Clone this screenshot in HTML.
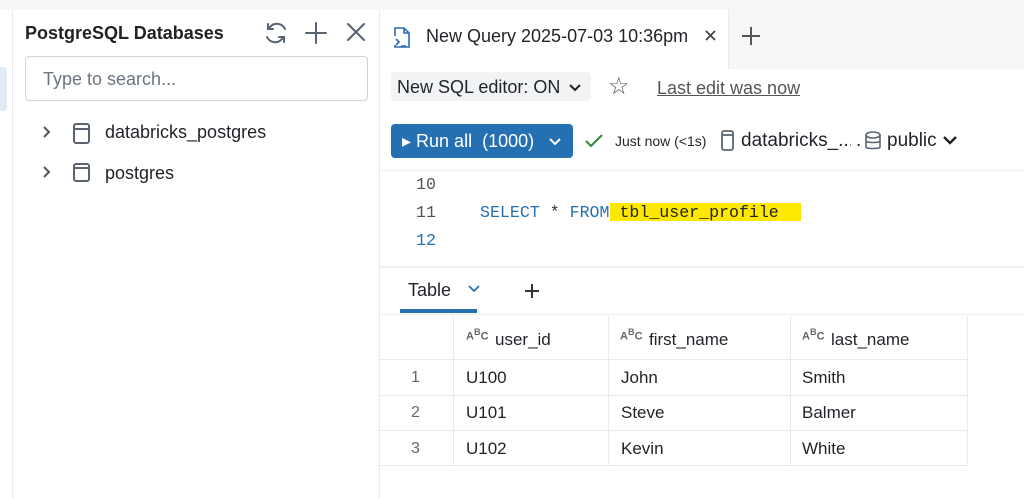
<!DOCTYPE html>
<html><head><style>
*{box-sizing:border-box;margin:0;padding:0}
body{width:1024px;height:498px;overflow:hidden;background:#fff;font-family:"Liberation Sans",sans-serif;color:#1f2328;position:relative}
.a{position:absolute}
.mono{font-family:"Liberation Mono",monospace}
</style></head><body>
<div class="a" style="left:0;top:0;width:1024px;height:10px;background:#f5f6f8"></div>
<div class="a" style="left:0;top:10px;width:13px;height:488px;background:#fff;border-right:1px solid #e8eaed"></div>
<div class="a" style="left:0;top:67px;width:7px;height:44px;background:#e1ebf5;border-radius:0 4px 4px 0"></div>
<div class="a" style="left:379px;top:10px;width:1px;height:488px;background:#e8eaed"></div>

<div class="a" style="left:25px;top:23px;font-size:18px;font-weight:bold;color:#222">PostgreSQL Databases</div>
<svg class="a" style="left:262px;top:20px" width="110" height="26" viewBox="0 0 110 26" fill="none" stroke="#5a6470" stroke-width="2" stroke-linecap="round">
<path d="M23 9a9 9 0 0 0-15-2l-2 2M5 17a9 9 0 0 0 15 2l2-2"/><path d="M6 4v5h5M22 22v-5h-5"/>
<path d="M54 3v20M44 13h20"/><path d="M86 4l16 16M102 4L86 20"/></svg>
<div class="a" style="left:25px;top:56px;width:343px;height:45px;border:1px solid #cfd4da;border-radius:4px;padding:12px 17px;font-size:18px;color:#6b7580">Type to search...</div>
<svg class="a" style="left:42px;top:126px" width="10" height="52" fill="none" stroke="#555" stroke-width="2"><path d="M2 1l5 5-5 5M2 41l5 5-5 5"/></svg>
<svg class="a" style="left:72px;top:122px" width="20" height="60" fill="none" stroke="#5a6470" stroke-width="2"><rect x="2" y="2" width="15" height="19" rx="2"/><path d="M2 7h15"/><rect x="2" y="42" width="15" height="17" rx="2"/><path d="M2 46h15"/></svg>
<div class="a" style="left:105px;top:122px;font-size:18px">databricks_postgres</div>
<div class="a" style="left:105px;top:163px;font-size:18px">postgres</div>

<div class="a" style="left:728px;top:10px;width:296px;height:59px;background:#f5f6f8;border-left:1px solid #e8eaed"></div>
<svg class="a" style="left:392px;top:26px" width="22" height="24" fill="none" stroke="#2a6db0" stroke-width="1.6"><path d="M3 10V2h9l5 5v14H3v-2M12 2v5h5"/><path d="M4 13l3 3-3 3M9 20h5"/></svg>
<div class="a" style="left:426px;top:26px;font-size:18px">New Query 2025-07-03 10:36pm</div>
<svg class="a" style="left:705px;top:30px" width="11" height="11" stroke="#444" stroke-width="1.8"><path d="M1 1l9 9M10 1L1 10"/></svg>
<svg class="a" style="left:740px;top:25px" width="22" height="22" stroke="#555" stroke-width="2"><path d="M11 2v18M2 11h18"/></svg>

<div class="a" style="left:391px;top:72px;width:200px;height:29px;background:#f2f3f5;border-radius:4px;padding:5px 6px;font-size:18px">New SQL editor: ON</div>
<svg class="a" style="left:569px;top:84px" width="12" height="8" fill="none" stroke="#222" stroke-width="2"><path d="M1 1l5 5 5-5"/></svg>
<div class="a" style="left:608px;top:72px;font-size:24px;color:#555">☆</div>
<div class="a" style="left:657px;top:78px;font-size:18px;color:#555;text-decoration:underline">Last edit was now</div>

<div class="a" style="left:391px;top:124px;width:182px;height:34px;background:#2470b3;border-radius:4px;color:#fff;font-size:18px;padding:7px 0 0 11px">▸ Run all &nbsp;(1000)</div>
<svg class="a" style="left:549px;top:138px" width="12" height="8" fill="none" stroke="#fff" stroke-width="2"><path d="M1 1l5 5 5-5"/></svg>
<svg class="a" style="left:584px;top:133px" width="20" height="16" fill="none" stroke="#2e8540" stroke-width="2"><path d="M2 8l5 5 11-11"/></svg>
<div class="a" style="left:615px;top:133px;font-size:14px">Just now (&lt;1s)</div>
<svg class="a" style="left:720px;top:129px" width="16" height="24" fill="none" stroke="#5a6470" stroke-width="1.8"><rect x="2" y="2" width="11" height="19" rx="2"/><path d="M2 6h11"/></svg>
<div class="a" style="left:741px;top:130px;font-size:19px;width:110px;overflow:hidden;white-space:nowrap">databricks_...</div>
<div class="a" style="left:856px;top:130px;font-size:19px">.</div>
<svg class="a" style="left:864px;top:131px" width="18" height="20" fill="none" stroke="#5a6470" stroke-width="1.6"><ellipse cx="9" cy="4" rx="7" ry="3"/><path d="M2 4v12c0 2 14 2 14 0V4M2 10c0 2 14 2 14 0"/></svg>
<div class="a" style="left:887px;top:130px;font-size:19px">public</div>
<svg class="a" style="left:943px;top:136px" width="14" height="9" fill="none" stroke="#222" stroke-width="2.4"><path d="M1 1l6 6 6-6"/></svg>

<div class="a" style="left:380px;top:170px;width:644px;height:1px;background:#eceef1"></div>
<div class="a mono" style="left:416px;top:175px;font-size:16.6px;color:#555">10</div>
<div class="a mono" style="left:416px;top:203px;font-size:16.6px;color:#555">11</div>
<div class="a mono" style="left:416px;top:231px;font-size:16.6px;color:#2470b3">12</div>
<div class="a" style="left:610px;top:203px;width:191px;height:18px;background:#ffe800"></div>
<div class="a mono" style="left:480px;top:203px;font-size:16.6px;color:#2470b3">SELECT <span style="color:#333">*</span> FROM<span style="color:#222"> tbl_user_profile</span></div>
<div class="a" style="left:380px;top:266px;width:644px;height:2px;background:#eceef1"></div>

<div class="a" style="left:408px;top:280px;font-size:18px">Table</div>
<svg class="a" style="left:468px;top:285px" width="12" height="8" fill="none" stroke="#2470b3" stroke-width="1.8"><path d="M1 1l5 5 5-5"/></svg>
<svg class="a" style="left:523px;top:282px" width="18" height="18" stroke="#333" stroke-width="2"><path d="M9 2v14M2 9h14"/></svg>
<div class="a" style="left:400px;top:309px;width:77px;height:4px;background:#2470b3"></div>
<div class="a" style="left:380px;top:314px;width:644px;height:1px;background:#eceef1"></div>

<div class="a" style="left:380px;top:316px;width:588px;height:150px;border-bottom:1px solid #e8eaed;border-right:1px solid #e8eaed"></div>
<div class="a" style="left:453px;top:316px;width:1px;height:150px;background:#e8eaed"></div>
<div class="a" style="left:608px;top:316px;width:1px;height:150px;background:#e8eaed"></div>
<div class="a" style="left:790px;top:316px;width:1px;height:150px;background:#e8eaed"></div>
<div class="a" style="left:380px;top:359px;width:588px;height:1px;background:#e8eaed"></div>
<div class="a" style="left:380px;top:395px;width:588px;height:1px;background:#e8eaed"></div>
<div class="a" style="left:380px;top:430px;width:588px;height:1px;background:#e8eaed"></div>

<div class="a" style="left:466px;top:327px;font-size:11px;color:#666;font-weight:bold">A<sup>B</sup>C</div>
<div class="a" style="left:495px;top:330px;font-size:17px">user_id</div>
<div class="a" style="left:620px;top:327px;font-size:11px;color:#666;font-weight:bold">A<sup>B</sup>C</div>
<div class="a" style="left:649px;top:330px;font-size:17px">first_name</div>
<div class="a" style="left:802px;top:327px;font-size:11px;color:#666;font-weight:bold">A<sup>B</sup>C</div>
<div class="a" style="left:831px;top:330px;font-size:17px">last_name</div>

<div class="a" style="left:411px;top:369px;font-size:16px;color:#666">1</div>
<div class="a" style="left:411px;top:404px;font-size:16px;color:#666">2</div>
<div class="a" style="left:411px;top:440px;font-size:16px;color:#666">3</div>
<div class="a" style="left:466px;top:368px;font-size:17px">U100</div>
<div class="a" style="left:466px;top:403px;font-size:17px">U101</div>
<div class="a" style="left:466px;top:439px;font-size:17px">U102</div>
<div class="a" style="left:621px;top:368px;font-size:17px">John</div>
<div class="a" style="left:621px;top:403px;font-size:17px">Steve</div>
<div class="a" style="left:621px;top:439px;font-size:17px">Kevin</div>
<div class="a" style="left:802px;top:368px;font-size:17px">Smith</div>
<div class="a" style="left:802px;top:403px;font-size:17px">Balmer</div>
<div class="a" style="left:802px;top:439px;font-size:17px">White</div>
</body></html>
